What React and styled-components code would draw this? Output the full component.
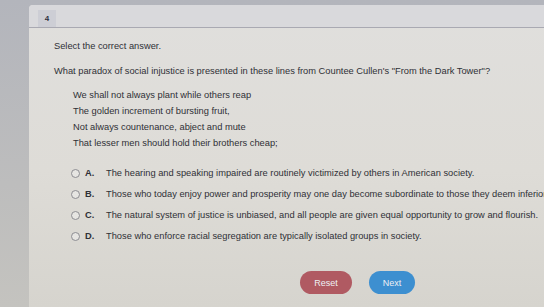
import React from 'react';
import styled, { createGlobalStyle } from 'styled-components';

const GlobalStyle = createGlobalStyle`
  html, body {
    margin: 0;
    padding: 0;
    width: 544px;
    height: 307px;
    overflow: hidden;
    background: #b6b7bd;
  }
  * { box-sizing: border-box; }
`;

const Screen = styled.div`
  display: flex;
  width: 544px;
  height: 307px;
  background: linear-gradient(180deg, #b3b5bc 0%, #bdbdbd 60%, #c4c3bf 100%);
  font-family: "Liberation Sans", Arial, sans-serif;
  color: #2f3036;
`;

const Sidebar = styled.div`
  width: 29px;
  flex-shrink: 0;
`;

const Main = styled.div`
  flex: 1;
  padding-top: 5px;
  min-width: 0;
  display: flex;
  flex-direction: column;
`;

const Panel = styled.div`
  flex: 1;
  border-top-left-radius: 4px;
  background: linear-gradient(180deg, #e0dfdd 0%, #dedcd7 55%, #d6d4ce 100%);
  overflow: hidden;
  display: flex;
  flex-direction: column;
`;

const Header = styled.div`
  height: 23px;
  padding-left: 9px;
  display: flex;
  align-items: flex-end;
  border-bottom: 1px solid #a9a9b2;
  background: #d9d9dc;
`;

const NumberBox = styled.div`
  width: 18px;
  height: 17px;
  background: #cdced5;
  display: flex;
  align-items: center;
  justify-content: center;
  font-size: 8px;
  font-weight: bold;
  color: #2f3040;
`;

const Body = styled.div`
  padding: 12px 0 0 25px;
  display: flex;
  flex-direction: column;
  white-space: nowrap;
  font-size: 9.3px;
`;

const Instruction = styled.div`
  line-height: 12px;
`;

const Question = styled.div`
  margin-top: 13px;
  line-height: 12px;
`;

const Poem = styled.div`
  margin-top: 12px;
  padding-left: 19px;
  display: flex;
  flex-direction: column;
  gap: 4px;
`;

const PoemLine = styled.div`
  line-height: 12px;
`;

const Options = styled.div`
  margin-top: 18px;
  padding-left: 17px;
  display: flex;
  flex-direction: column;
  gap: 9px;
`;

const Option = styled.label`
  display: flex;
  align-items: center;
  height: 12px;
`;

const Radio = styled.span`
  width: 9px;
  height: 9px;
  border-radius: 50%;
  border: 1px solid #8d8d92;
  background: #e6e5e2;
  flex-shrink: 0;
`;

const Letter = styled.span`
  width: 21px;
  margin-left: 5px;
  font-weight: bold;
  flex-shrink: 0;
`;

const OptionText = styled.span`
  flex-shrink: 0;
`;

const Buttons = styled.div`
  margin-top: 29px;
  padding-left: 246px;
  display: flex;
  gap: 17px;
`;

const Button = styled.button`
  height: 23px;
  width: ${p => p.$w}px;
  border: none;
  border-radius: 12px;
  background: ${p => p.$bg};
  color: #eef0f4;
  font-family: "Liberation Sans", Arial, sans-serif;
  font-size: 9px;
  padding: 0;
`;

const options = [
  ['A.', 'The hearing and speaking impaired are routinely victimized by others in American society.'],
  ['B.', 'Those who today enjoy power and prosperity may one day become subordinate to those they deem inferior.'],
  ['C.', 'The natural system of justice is unbiased, and all people are given equal opportunity to grow and flourish.'],
  ['D.', 'Those who enforce racial segregation are typically isolated groups in society.'],
];

const poem = [
  'We shall not always plant while others reap',
  'The golden increment of bursting fruit,',
  'Not always countenance, abject and mute',
  'That lesser men should hold their brothers cheap;',
];

export default function App() {
  return (
    <>
      <GlobalStyle />
      <Screen>
        <Sidebar />
        <Main>
          <Panel>
            <Header>
              <NumberBox>4</NumberBox>
            </Header>
            <Body>
              <Instruction>Select the correct answer.</Instruction>
              <Question>
                What paradox of social injustice is presented in these lines from Countee Cullen's "From the Dark Tower"?
              </Question>
              <Poem>
                {poem.map(l => <PoemLine key={l}>{l}</PoemLine>)}
              </Poem>
              <Options>
                {options.map(([k, t]) => (
                  <Option key={k}>
                    <Radio />
                    <Letter>{k}</Letter>
                    <OptionText>{t}</OptionText>
                  </Option>
                ))}
              </Options>
              <Buttons>
                <Button $w={52} $bg="#b05a62">Reset</Button>
                <Button $w={46} $bg="#3d8fd0">Next</Button>
              </Buttons>
            </Body>
          </Panel>
        </Main>
      </Screen>
    </>
  );
}
